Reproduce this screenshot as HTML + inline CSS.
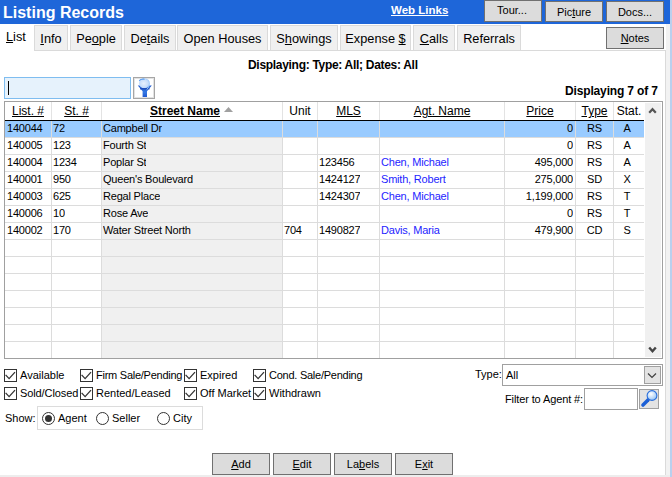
<!DOCTYPE html>
<html><head><meta charset="utf-8">
<style>
*{margin:0;padding:0;box-sizing:border-box}
html,body{width:672px;height:477px;overflow:hidden;background:#fff;font-family:"Liberation Sans",sans-serif;font-size:12px;color:#000}
body{position:relative}
div,span{position:absolute;white-space:nowrap}
u{text-decoration:underline;position:static}
#title{left:0;top:0;width:670px;height:24px;background:#1e66d9}
.btn{background:#dcdcdc;border:1px solid #707070;text-align:center;font-size:11px}
.tab{top:25px;height:26px;background:#f0f0f0;border:1px solid #dadada;font-size:12.75px;text-align:center;line-height:25px}
.cell{font-size:11px;line-height:13px;height:13px;overflow:hidden;letter-spacing:-0.2px}
.hd{font-size:12px;line-height:14px}
.hd u{text-decoration:underline}
.cb{width:13px;height:13px;border:1px solid #333;background:#fff}
.lbl{font-size:11px;line-height:13px}
.rad{width:13px;height:13px;border:1px solid #333;border-radius:50%;background:#fff}
</style></head><body>
<div id="title">
  <div style="left:3px;top:3px;font-size:16px;font-weight:bold;color:#fff;line-height:20px">Listing Records</div>
  <div style="left:391px;top:3px;font-size:11.5px;font-weight:bold;color:#fff;text-decoration:underline;line-height:14px">Web Links</div>
</div>
<div style="left:670px;top:0;width:2px;height:477px;background:#b9d0ee"></div>
<div class="btn" style="left:484px;top:0;width:58px;height:22px;line-height:18px;padding-right:2px">Tour...</div>
<div class="btn" style="left:545px;top:1px;width:58px;height:21px;line-height:20px">Pic<u>t</u>ure</div>
<div class="btn" style="left:606px;top:1px;width:58px;height:21px;line-height:20px">Docs...</div>

<div style="left:6px;top:28px;font-size:12.75px;line-height:18px"><u>L</u>ist</div>
<div class="tab" style="left:34px;width:34px"><u>I</u>nfo</div>
<div class="tab" style="left:70px;width:52px">Pe<u>o</u>ple</div>
<div class="tab" style="left:124px;width:52px">De<u>t</u>ails</div>
<div class="tab" style="left:177px;width:91px">Open Houses</div>
<div class="tab" style="left:270px;width:68px">S<u>h</u>owings</div>
<div class="tab" style="left:340px;width:71px">Expense <u>$</u></div>
<div class="tab" style="left:413px;width:42px"><u>C</u>alls</div>
<div class="tab" style="left:457px;width:64px">Referrals</div>
<div class="btn" style="left:606px;top:27px;width:58px;height:22px;line-height:20px"><u>N</u>otes</div>
<div style="left:34px;top:50px;width:632px;height:1px;background:#dadada"></div>
<div style="left:665px;top:50px;width:1px;height:425px;background:#dadada"></div>
<div style="left:666px;top:24px;width:4px;height:453px;background:#f2f2f2"></div>
<div style="left:0;top:475px;width:670px;height:2px;background:#ededed"></div>

<div style="left:248px;top:58px;font-weight:bold;line-height:14px;letter-spacing:-0.3px">Displaying: Type: All; Dates: All</div>
<div style="left:565px;top:84px;font-weight:bold;line-height:14px;letter-spacing:-0.15px">Displaying 7 of 7</div>

<div style="left:4px;top:77px;width:127px;height:22px;border:1px solid #7fbdf0;background:#e6f2fc"></div>
<div style="left:8px;top:81px;width:1px;height:14px;background:#000"></div>
<div style="left:133px;top:77px;width:22px;height:22px;border:1px solid #a6a6a6;box-shadow:inset 0 0 0 1px #e2e2e2;background:#fff"></div>

<svg style="position:absolute;left:133px;top:77px" width="22" height="22" viewBox="0 0 22 22">
<defs><linearGradient id="fg" x1="0" y1="0" x2="0" y2="1"><stop offset="0" stop-color="#2058cc"/><stop offset="0.6" stop-color="#3478e4"/><stop offset="1" stop-color="#1f58d0"/></linearGradient>
<radialGradient id="sg" cx="0.45" cy="0.5" r="0.6"><stop offset="0" stop-color="#e8f1fd"/><stop offset="0.7" stop-color="#c4dcfa"/><stop offset="1" stop-color="#7ab4f5"/></radialGradient>
<clipPath id="cp"><rect x="0" y="0" width="22" height="11.2"/></clipPath></defs>
<path d="M4.8 8.4 L18.8 8.4 L14 14.2 L14 19.9 L9.6 19.9 L9.6 14.2 Z" fill="url(#fg)"/>
<ellipse cx="11.4" cy="6.4" rx="5.4" ry="5" fill="url(#sg)" clip-path="url(#cp)"/>
<path d="M7 11.8 L16.6 11.8" stroke="#1848b4" stroke-width="1.2"/>
<path d="M6.2 3.6 Q8.5 1.6 11.5 2.2" fill="none" stroke="#3f8ff0" stroke-width="1.1"/>
<path d="M13.8 12.5 Q16 10.5 16.4 7.5" fill="none" stroke="#a8d0f8" stroke-width="0.9"/>
</svg>

<div style="left:4px;top:101px;width:659px;height:258px;border:1px solid #a0a0a0;background:#fff"></div>
<div style="left:102px;top:122px;width:180px;height:236px;background:#f0f0f0"></div>
<div style="left:5px;top:121px;width:639px;height:16px;background:#99cbff"></div>
<div style="left:5px;top:120px;width:639px;height:1px;background:#000"></div>
<div style="left:5px;top:137px;width:639px;height:1px;background:#dcdcdc"></div>
<div style="left:5px;top:154px;width:639px;height:1px;background:#dcdcdc"></div>
<div style="left:5px;top:171px;width:639px;height:1px;background:#dcdcdc"></div>
<div style="left:5px;top:188px;width:639px;height:1px;background:#dcdcdc"></div>
<div style="left:5px;top:205px;width:639px;height:1px;background:#dcdcdc"></div>
<div style="left:5px;top:222px;width:639px;height:1px;background:#dcdcdc"></div>
<div style="left:5px;top:239px;width:639px;height:1px;background:#dcdcdc"></div>
<div style="left:5px;top:256px;width:639px;height:1px;background:#dcdcdc"></div>
<div style="left:5px;top:273px;width:639px;height:1px;background:#dcdcdc"></div>
<div style="left:5px;top:290px;width:639px;height:1px;background:#dcdcdc"></div>
<div style="left:5px;top:307px;width:639px;height:1px;background:#dcdcdc"></div>
<div style="left:5px;top:324px;width:639px;height:1px;background:#dcdcdc"></div>
<div style="left:5px;top:341px;width:639px;height:1px;background:#dcdcdc"></div>
<div style="left:51px;top:102px;width:1px;height:18px;background:#e3e3e3"></div>
<div style="left:51px;top:121px;width:1px;height:237px;background:#dcdcdc"></div>
<div style="left:101px;top:102px;width:1px;height:18px;background:#e3e3e3"></div>
<div style="left:101px;top:121px;width:1px;height:237px;background:#dcdcdc"></div>
<div style="left:282px;top:102px;width:1px;height:18px;background:#e3e3e3"></div>
<div style="left:282px;top:121px;width:1px;height:237px;background:#dcdcdc"></div>
<div style="left:317px;top:102px;width:1px;height:18px;background:#e3e3e3"></div>
<div style="left:317px;top:121px;width:1px;height:237px;background:#dcdcdc"></div>
<div style="left:379px;top:102px;width:1px;height:18px;background:#e3e3e3"></div>
<div style="left:379px;top:121px;width:1px;height:237px;background:#dcdcdc"></div>
<div style="left:504px;top:102px;width:1px;height:18px;background:#e3e3e3"></div>
<div style="left:504px;top:121px;width:1px;height:237px;background:#dcdcdc"></div>
<div style="left:575px;top:102px;width:1px;height:18px;background:#e3e3e3"></div>
<div style="left:575px;top:121px;width:1px;height:237px;background:#dcdcdc"></div>
<div style="left:613px;top:102px;width:1px;height:18px;background:#e3e3e3"></div>
<div style="left:613px;top:121px;width:1px;height:237px;background:#dcdcdc"></div>
<div style="left:645px;top:103px;width:16px;height:254px;background:#f0f0f0"></div>
<svg style="position:absolute;left:648px;top:107px" width="10" height="8"><path d="M1.2 5.8 L4.5 2.2 L7.8 5.8" fill="none" stroke="#555" stroke-width="2.2"/></svg>
<svg style="position:absolute;left:648px;top:346px" width="10" height="8"><path d="M1.2 1.5 L4.5 5.2 L7.8 1.5" fill="none" stroke="#444" stroke-width="2.4"/></svg>
<div class="hd" style="left:5px;top:104px;width:46px;text-align:center"><u>List. #</u></div>
<div class="hd" style="left:52px;top:104px;width:49px;text-align:center"><u>St. #</u></div>
<div class="hd" style="left:102px;top:104px;width:180px;text-align:center"><b><u>Street Name</u></b><svg style="position:relative;display:inline-block;margin-left:4px;top:-2px" width="10" height="6"><path d="M0 5 L4.5 0 L9 5 Z" fill="#a0a0a0"/></svg></div>
<div class="hd" style="left:283px;top:104px;width:34px;text-align:center">Unit</div>
<div class="hd" style="left:318px;top:104px;width:61px;text-align:center"><u>MLS</u></div>
<div class="hd" style="left:380px;top:104px;width:124px;text-align:center"><u>Agt. Name</u></div>
<div class="hd" style="left:505px;top:104px;width:70px;text-align:center"><u>Price</u></div>
<div class="hd" style="left:576px;top:104px;width:37px;text-align:center"><u>Type</u></div>
<div class="hd" style="left:614px;top:104px;width:30px;text-align:center">Stat.</div>
<div class="cell" style="left:7px;top:122px;color:#000">140044</div>
<div class="cell" style="left:53px;top:122px;color:#000">72</div>
<div class="cell" style="left:103px;top:122px;color:#000">Campbell Dr</div>
<div class="cell" style="left:505px;top:122px;width:68px;text-align:right">0</div>
<div class="cell" style="left:576px;top:122px;width:37px;text-align:center">RS</div>
<div class="cell" style="left:614px;top:122px;width:26px;text-align:center">A</div>
<div class="cell" style="left:7px;top:139px;color:#000">140005</div>
<div class="cell" style="left:53px;top:139px;color:#000">123</div>
<div class="cell" style="left:103px;top:139px;color:#000">Fourth St</div>
<div class="cell" style="left:505px;top:139px;width:68px;text-align:right">0</div>
<div class="cell" style="left:576px;top:139px;width:37px;text-align:center">RS</div>
<div class="cell" style="left:614px;top:139px;width:26px;text-align:center">A</div>
<div class="cell" style="left:7px;top:156px;color:#000">140004</div>
<div class="cell" style="left:53px;top:156px;color:#000">1234</div>
<div class="cell" style="left:103px;top:156px;color:#000">Poplar St</div>
<div class="cell" style="left:319px;top:156px;color:#000">123456</div>
<div class="cell" style="left:381px;top:156px;color:#1e1eff">Chen, Michael</div>
<div class="cell" style="left:505px;top:156px;width:68px;text-align:right">495,000</div>
<div class="cell" style="left:576px;top:156px;width:37px;text-align:center">RS</div>
<div class="cell" style="left:614px;top:156px;width:26px;text-align:center">A</div>
<div class="cell" style="left:7px;top:173px;color:#000">140001</div>
<div class="cell" style="left:53px;top:173px;color:#000">950</div>
<div class="cell" style="left:103px;top:173px;color:#000">Queen's Boulevard</div>
<div class="cell" style="left:319px;top:173px;color:#000">1424127</div>
<div class="cell" style="left:381px;top:173px;color:#1e1eff">Smith, Robert</div>
<div class="cell" style="left:505px;top:173px;width:68px;text-align:right">275,000</div>
<div class="cell" style="left:576px;top:173px;width:37px;text-align:center">SD</div>
<div class="cell" style="left:614px;top:173px;width:26px;text-align:center">X</div>
<div class="cell" style="left:7px;top:190px;color:#000">140003</div>
<div class="cell" style="left:53px;top:190px;color:#000">625</div>
<div class="cell" style="left:103px;top:190px;color:#000">Regal Place</div>
<div class="cell" style="left:319px;top:190px;color:#000">1424307</div>
<div class="cell" style="left:381px;top:190px;color:#1e1eff">Chen, Michael</div>
<div class="cell" style="left:505px;top:190px;width:68px;text-align:right">1,199,000</div>
<div class="cell" style="left:576px;top:190px;width:37px;text-align:center">RS</div>
<div class="cell" style="left:614px;top:190px;width:26px;text-align:center">T</div>
<div class="cell" style="left:7px;top:207px;color:#000">140006</div>
<div class="cell" style="left:53px;top:207px;color:#000">10</div>
<div class="cell" style="left:103px;top:207px;color:#000">Rose Ave</div>
<div class="cell" style="left:505px;top:207px;width:68px;text-align:right">0</div>
<div class="cell" style="left:576px;top:207px;width:37px;text-align:center">RS</div>
<div class="cell" style="left:614px;top:207px;width:26px;text-align:center">T</div>
<div class="cell" style="left:7px;top:224px;color:#000">140002</div>
<div class="cell" style="left:53px;top:224px;color:#000">170</div>
<div class="cell" style="left:103px;top:224px;color:#000">Water Street North</div>
<div class="cell" style="left:284px;top:224px;color:#000">704</div>
<div class="cell" style="left:319px;top:224px;color:#000">1490827</div>
<div class="cell" style="left:381px;top:224px;color:#1e1eff">Davis, Maria</div>
<div class="cell" style="left:505px;top:224px;width:68px;text-align:right">479,900</div>
<div class="cell" style="left:576px;top:224px;width:37px;text-align:center">CD</div>
<div class="cell" style="left:614px;top:224px;width:26px;text-align:center">S</div>
<div class="cb" style="left:4px;top:369px"><svg style="position:absolute;left:0;top:0" width="11" height="11"><path d="M0.6 4.9 L4.1 8.6 L10 2.1" fill="none" stroke="#333" stroke-width="1.3"/></svg></div>
<div class="lbl" style="left:20px;top:369px;letter-spacing:0px">Available</div>
<div class="cb" style="left:80px;top:369px"><svg style="position:absolute;left:0;top:0" width="11" height="11"><path d="M0.6 4.9 L4.1 8.6 L10 2.1" fill="none" stroke="#333" stroke-width="1.3"/></svg></div>
<div class="lbl" style="left:96px;top:369px;letter-spacing:-0.25px">Firm Sale/Pending</div>
<div class="cb" style="left:184px;top:369px"><svg style="position:absolute;left:0;top:0" width="11" height="11"><path d="M0.6 4.9 L4.1 8.6 L10 2.1" fill="none" stroke="#333" stroke-width="1.3"/></svg></div>
<div class="lbl" style="left:200px;top:369px;letter-spacing:0px">Expired</div>
<div class="cb" style="left:253px;top:369px"><svg style="position:absolute;left:0;top:0" width="11" height="11"><path d="M0.6 4.9 L4.1 8.6 L10 2.1" fill="none" stroke="#333" stroke-width="1.3"/></svg></div>
<div class="lbl" style="left:269px;top:369px;letter-spacing:-0.25px">Cond. Sale/Pending</div>
<div class="cb" style="left:4px;top:387px"><svg style="position:absolute;left:0;top:0" width="11" height="11"><path d="M0.6 4.9 L4.1 8.6 L10 2.1" fill="none" stroke="#333" stroke-width="1.3"/></svg></div>
<div class="lbl" style="left:20px;top:387px;letter-spacing:-0.1px">Sold/Closed</div>
<div class="cb" style="left:80px;top:387px"><svg style="position:absolute;left:0;top:0" width="11" height="11"><path d="M0.6 4.9 L4.1 8.6 L10 2.1" fill="none" stroke="#333" stroke-width="1.3"/></svg></div>
<div class="lbl" style="left:96px;top:387px;letter-spacing:0px">Rented/Leased</div>
<div class="cb" style="left:184px;top:387px"><svg style="position:absolute;left:0;top:0" width="11" height="11"><path d="M0.6 4.9 L4.1 8.6 L10 2.1" fill="none" stroke="#333" stroke-width="1.3"/></svg></div>
<div class="lbl" style="left:200px;top:387px;letter-spacing:0px">Off Market</div>
<div class="cb" style="left:253px;top:387px"><svg style="position:absolute;left:0;top:0" width="11" height="11"><path d="M0.6 4.9 L4.1 8.6 L10 2.1" fill="none" stroke="#333" stroke-width="1.3"/></svg></div>
<div class="lbl" style="left:269px;top:387px;letter-spacing:0px">Withdrawn</div>
<div class="lbl" style="left:5px;top:412px">Show:</div>
<div style="left:37px;top:406px;width:166px;height:24px;border:1px solid #dcdcdc"></div>
<div class="rad" style="left:42px;top:412px"><div style="left:2px;top:2px;width:7px;height:7px;border-radius:50%;background:#333"></div></div>
<div class="lbl" style="left:58px;top:412px">Agent</div>
<div class="rad" style="left:96px;top:412px"></div>
<div class="lbl" style="left:112px;top:412px">Seller</div>
<div class="rad" style="left:157px;top:412px"></div>
<div class="lbl" style="left:173px;top:412px">City</div>
<div class="lbl" style="left:475px;top:368px">Type:</div>
<div style="left:502px;top:364px;width:161px;height:22px;border:1px solid #a0a0a0;background:#fff"></div>
<div class="lbl" style="left:506px;top:369px">All</div>
<div style="left:644px;top:366px;width:17px;height:18px;border:1px solid #a0a0a0;background:#e3e3e3"></div>
<svg style="position:absolute;left:647px;top:372px" width="10" height="7"><path d="M1 1.5 L5 5.5 L9 1.5" fill="none" stroke="#404040" stroke-width="1.2"/></svg>
<div class="lbl" style="left:505px;top:393px;letter-spacing:-0.12px">Filter to Agent #:</div>
<div style="left:584px;top:388px;width:54px;height:22px;border:1px solid #a0a0a0;background:#fff"></div>
<div style="left:639px;top:389px;width:20px;height:20px;border:1px solid #a0a0a0;background:#e3e3e3"></div>
<svg style="position:absolute;left:640px;top:389px" width="19" height="19" viewBox="0 0 19 19">
<defs><radialGradient id="lg" cx="0.4" cy="0.35" r="0.7"><stop offset="0" stop-color="#ffffff"/><stop offset="1" stop-color="#8fc0f5"/></radialGradient></defs>
<path d="M3 16 L8 11" stroke="#1b5fd6" stroke-width="3.6" stroke-linecap="round"/>
<circle cx="12" cy="6.5" r="4.9" fill="url(#lg)" stroke="#2a6fdc" stroke-width="1.1"/>
</svg>
<div class="btn" style="left:212px;top:453px;width:58px;height:22px;line-height:20px;font-size:11px"><u>A</u>dd</div>
<div class="btn" style="left:273px;top:453px;width:58px;height:22px;line-height:20px;font-size:11px"><u>E</u>dit</div>
<div class="btn" style="left:334px;top:453px;width:58px;height:22px;line-height:20px;font-size:11px">La<u>b</u>els</div>
<div class="btn" style="left:395px;top:453px;width:58px;height:22px;line-height:20px;font-size:11px">E<u>x</u>it</div>
</body></html>
